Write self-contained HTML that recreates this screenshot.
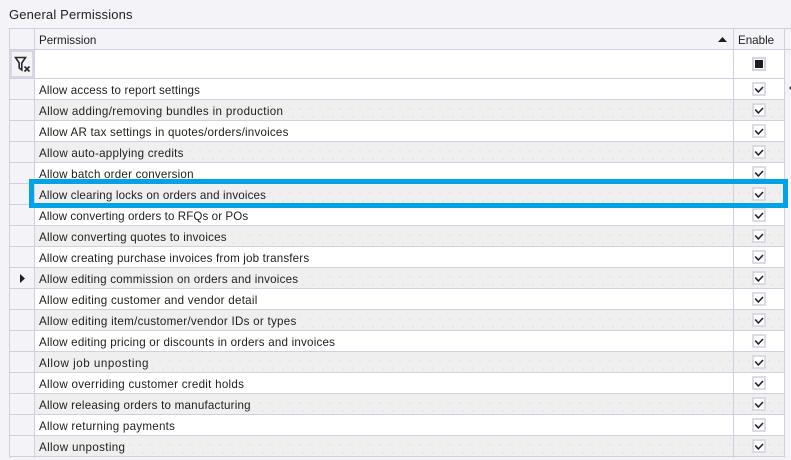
<!DOCTYPE html>
<html><head><meta charset="utf-8">
<style>
html,body{margin:0;padding:0}
body{width:791px;height:458px;overflow:hidden;background:#f4f4f8;position:relative;font-family:"Liberation Sans",sans-serif;color:#1e1e1e}
.a{position:absolute}
.h{background:#d0d0e0}
.r{position:absolute;left:35px;width:698px;height:20px;font-size:11.6px;letter-spacing:.21px;line-height:24px;padding-left:4px;box-sizing:border-box;white-space:nowrap;background:#fff}
.r.o,.e.o{background-color:#efefef;background-image:radial-gradient(circle,#e0e0e4 0.7px,transparent 0.9px),radial-gradient(circle,#e0e0e4 0.7px,transparent 0.9px);background-size:10px 10px,10px 10px;background-repeat:repeat-x,repeat-x;background-position:0 4px,3px 12px}
.r.o span{background:#efefef;display:inline-block;height:20px;padding-right:3px}
.e{position:absolute;left:734px;width:50px;height:20px;background:#fff}
svg.c{position:absolute;left:752px;width:14px;height:14px}
</style></head><body>
<div class="a" style="left:9px;top:7px;font-size:13px;letter-spacing:.16px;line-height:16px;color:#222">General Permissions</div>

<div class="a" style="left:35px;top:50px;width:698px;height:28px;background:#fff"></div>
<div class="a" style="left:734px;top:50px;width:50px;height:28px;background:#fff"></div>
<div class="a" style="left:39px;top:33px;font-size:11.6px;line-height:15px">Permission</div>
<div class="a" style="left:738px;top:33px;font-size:11.6px;line-height:15px">Enable</div>
<svg class="a" style="left:718px;top:37px" width="9" height="5"><path d="M0 5L4.5 0L9 5Z" fill="#1e1e1e"/></svg>

<div class="r" style="top:79px;letter-spacing:.145px">Allow access to report settings</div><div class="e" style="top:79px"></div>
<div class="r o" style="top:100px;letter-spacing:.33px"><span>Allow adding/removing bundles in production</span></div><div class="e o" style="top:100px"></div>
<div class="r" style="top:121px">Allow AR tax settings in quotes/orders/invoices</div><div class="e" style="top:121px"></div>
<div class="r o" style="top:142px;letter-spacing:.25px"><span>Allow auto-applying credits</span></div><div class="e o" style="top:142px"></div>
<div class="r" style="top:163px">Allow batch order conversion</div><div class="e" style="top:163px"></div>
<div class="r o" style="top:184px;letter-spacing:.14px"><span>Allow clearing locks on orders and invoices</span></div><div class="e o" style="top:184px"></div>
<div class="r" style="top:205px;letter-spacing:.08px">Allow converting orders to RFQs or POs</div><div class="e" style="top:205px"></div>
<div class="r o" style="top:226px"><span>Allow converting quotes to invoices</span></div><div class="e o" style="top:226px"></div>
<div class="r" style="top:247px;letter-spacing:.17px">Allow creating purchase invoices from job transfers</div><div class="e" style="top:247px"></div>
<div class="r o" style="top:268px"><span>Allow editing commission on orders and invoices</span></div><div class="e o" style="top:268px"></div>
<div class="r" style="top:289px;letter-spacing:.26px">Allow editing customer and vendor detail</div><div class="e" style="top:289px"></div>
<div class="r o" style="top:310px;letter-spacing:.27px"><span>Allow editing item/customer/vendor IDs or types</span></div><div class="e o" style="top:310px"></div>
<div class="r" style="top:331px">Allow editing pricing or discounts in orders and invoices</div><div class="e" style="top:331px"></div>
<div class="r o" style="top:352px;letter-spacing:.53px"><span>Allow job unposting</span></div><div class="e o" style="top:352px"></div>
<div class="r" style="top:373px;letter-spacing:.26px">Allow overriding customer credit holds</div><div class="e" style="top:373px"></div>
<div class="r o" style="top:394px"><span>Allow releasing orders to manufacturing</span></div><div class="e o" style="top:394px"></div>
<div class="r" style="top:415px;letter-spacing:.25px">Allow returning payments</div><div class="e" style="top:415px"></div>
<div class="r o" style="top:436px;letter-spacing:.34px"><span>Allow unposting</span></div><div class="e o" style="top:436px"></div>

<!-- grid lines -->
<div class="a h" style="left:9px;top:28px;width:1px;height:430px"></div>
<div class="a h" style="left:34px;top:28px;width:1px;height:430px"></div>
<div class="a h" style="left:733px;top:28px;width:1px;height:430px"></div>
<div class="a h" style="left:784px;top:28px;width:1px;height:430px"></div>
<div class="a h" style="left:9px;top:28px;width:782px;height:1px"></div>
<div class="a h" style="left:9px;top:49px;width:782px;height:1px"></div>
<div class="a h" style="left:9px;top:78px;width:776px;height:1px"></div>
<div class="a h" style="left:9px;top:99px;width:776px;height:1px"></div>
<div class="a h" style="left:9px;top:120px;width:776px;height:1px"></div>
<div class="a h" style="left:9px;top:141px;width:776px;height:1px"></div>
<div class="a h" style="left:9px;top:162px;width:776px;height:1px"></div>
<div class="a h" style="left:9px;top:183px;width:776px;height:1px"></div>
<div class="a h" style="left:9px;top:204px;width:776px;height:1px"></div>
<div class="a h" style="left:9px;top:225px;width:776px;height:1px"></div>
<div class="a h" style="left:9px;top:246px;width:776px;height:1px"></div>
<div class="a h" style="left:9px;top:267px;width:776px;height:1px"></div>
<div class="a h" style="left:9px;top:288px;width:776px;height:1px"></div>
<div class="a h" style="left:9px;top:309px;width:776px;height:1px"></div>
<div class="a h" style="left:9px;top:330px;width:776px;height:1px"></div>
<div class="a h" style="left:9px;top:351px;width:776px;height:1px"></div>
<div class="a h" style="left:9px;top:372px;width:776px;height:1px"></div>
<div class="a h" style="left:9px;top:393px;width:776px;height:1px"></div>
<div class="a h" style="left:9px;top:414px;width:776px;height:1px"></div>
<div class="a h" style="left:9px;top:435px;width:776px;height:1px"></div>
<div class="a h" style="left:9px;top:456px;width:776px;height:1px"></div>

<!-- filter button -->
<div class="a" style="left:10px;top:50px;width:20px;height:24px;border:2px solid #d8d8e4;background:#f4f4f8"></div>
<svg class="a" style="left:14px;top:56px" width="18" height="17" viewBox="0 0 18 17"><path d="M1.5 1.5H11.5L7.8 7V14L5.2 12V7Z" fill="none" stroke="#2a2a2a" stroke-width="1.6"/><path d="M10.5 10.5L15.5 15.5M15.5 10.5L10.5 15.5" stroke="#2a2a2a" stroke-width="1.7"/></svg>

<!-- tri-state checkbox -->
<div class="a" style="left:752px;top:57px;width:10px;height:10px;border:2px solid #d4d4e0;background:#fff"></div>
<div class="a" style="left:755px;top:60px;width:8px;height:8px;background:#1e1e1e"></div>

<!-- checkboxes -->
<svg class="c" style="top:82px" viewBox="0 0 14 14"><rect x="1" y="1" width="12" height="12" fill="#fff" stroke="#d4d4e0" stroke-width="1.6"/><path d="M3.2 6.5L6.3 10L11 5" fill="none" stroke="#222" stroke-width="1.6"/></svg>
<svg class="c" style="top:103px" viewBox="0 0 14 14"><rect x="1" y="1" width="12" height="12" fill="#fff" stroke="#d4d4e0" stroke-width="1.6"/><path d="M3.2 6.5L6.3 10L11 5" fill="none" stroke="#222" stroke-width="1.6"/></svg>
<svg class="c" style="top:124px" viewBox="0 0 14 14"><rect x="1" y="1" width="12" height="12" fill="#fff" stroke="#d4d4e0" stroke-width="1.6"/><path d="M3.2 6.5L6.3 10L11 5" fill="none" stroke="#222" stroke-width="1.6"/></svg>
<svg class="c" style="top:145px" viewBox="0 0 14 14"><rect x="1" y="1" width="12" height="12" fill="#fff" stroke="#d4d4e0" stroke-width="1.6"/><path d="M3.2 6.5L6.3 10L11 5" fill="none" stroke="#222" stroke-width="1.6"/></svg>
<svg class="c" style="top:166px" viewBox="0 0 14 14"><rect x="1" y="1" width="12" height="12" fill="#fff" stroke="#d4d4e0" stroke-width="1.6"/><path d="M3.2 6.5L6.3 10L11 5" fill="none" stroke="#222" stroke-width="1.6"/></svg>
<svg class="c" style="top:187px" viewBox="0 0 14 14"><rect x="1" y="1" width="12" height="12" fill="#fff" stroke="#d4d4e0" stroke-width="1.6"/><path d="M3.2 6.5L6.3 10L11 5" fill="none" stroke="#222" stroke-width="1.6"/></svg>
<svg class="c" style="top:208px" viewBox="0 0 14 14"><rect x="1" y="1" width="12" height="12" fill="#fff" stroke="#d4d4e0" stroke-width="1.6"/><path d="M3.2 6.5L6.3 10L11 5" fill="none" stroke="#222" stroke-width="1.6"/></svg>
<svg class="c" style="top:229px" viewBox="0 0 14 14"><rect x="1" y="1" width="12" height="12" fill="#fff" stroke="#d4d4e0" stroke-width="1.6"/><path d="M3.2 6.5L6.3 10L11 5" fill="none" stroke="#222" stroke-width="1.6"/></svg>
<svg class="c" style="top:250px" viewBox="0 0 14 14"><rect x="1" y="1" width="12" height="12" fill="#fff" stroke="#d4d4e0" stroke-width="1.6"/><path d="M3.2 6.5L6.3 10L11 5" fill="none" stroke="#222" stroke-width="1.6"/></svg>
<svg class="c" style="top:271px" viewBox="0 0 14 14"><rect x="1" y="1" width="12" height="12" fill="#fff" stroke="#d4d4e0" stroke-width="1.6"/><path d="M3.2 6.5L6.3 10L11 5" fill="none" stroke="#222" stroke-width="1.6"/></svg>
<svg class="c" style="top:292px" viewBox="0 0 14 14"><rect x="1" y="1" width="12" height="12" fill="#fff" stroke="#d4d4e0" stroke-width="1.6"/><path d="M3.2 6.5L6.3 10L11 5" fill="none" stroke="#222" stroke-width="1.6"/></svg>
<svg class="c" style="top:313px" viewBox="0 0 14 14"><rect x="1" y="1" width="12" height="12" fill="#fff" stroke="#d4d4e0" stroke-width="1.6"/><path d="M3.2 6.5L6.3 10L11 5" fill="none" stroke="#222" stroke-width="1.6"/></svg>
<svg class="c" style="top:334px" viewBox="0 0 14 14"><rect x="1" y="1" width="12" height="12" fill="#fff" stroke="#d4d4e0" stroke-width="1.6"/><path d="M3.2 6.5L6.3 10L11 5" fill="none" stroke="#222" stroke-width="1.6"/></svg>
<svg class="c" style="top:355px" viewBox="0 0 14 14"><rect x="1" y="1" width="12" height="12" fill="#fff" stroke="#d4d4e0" stroke-width="1.6"/><path d="M3.2 6.5L6.3 10L11 5" fill="none" stroke="#222" stroke-width="1.6"/></svg>
<svg class="c" style="top:376px" viewBox="0 0 14 14"><rect x="1" y="1" width="12" height="12" fill="#fff" stroke="#d4d4e0" stroke-width="1.6"/><path d="M3.2 6.5L6.3 10L11 5" fill="none" stroke="#222" stroke-width="1.6"/></svg>
<svg class="c" style="top:397px" viewBox="0 0 14 14"><rect x="1" y="1" width="12" height="12" fill="#fff" stroke="#d4d4e0" stroke-width="1.6"/><path d="M3.2 6.5L6.3 10L11 5" fill="none" stroke="#222" stroke-width="1.6"/></svg>
<svg class="c" style="top:418px" viewBox="0 0 14 14"><rect x="1" y="1" width="12" height="12" fill="#fff" stroke="#d4d4e0" stroke-width="1.6"/><path d="M3.2 6.5L6.3 10L11 5" fill="none" stroke="#222" stroke-width="1.6"/></svg>
<svg class="c" style="top:439px" viewBox="0 0 14 14"><rect x="1" y="1" width="12" height="12" fill="#fff" stroke="#d4d4e0" stroke-width="1.6"/><path d="M3.2 6.5L6.3 10L11 5" fill="none" stroke="#222" stroke-width="1.6"/></svg>

<!-- row indicator -->
<svg class="a" style="left:20px;top:274px" width="5" height="9"><path d="M0 0L5 4.5L0 9Z" fill="#1e1e1e"/></svg>
<!-- scrollbar arrow sliver -->
<svg class="a" style="left:789px;top:86px" width="2" height="4"><path d="M0 2L2 0V4Z" fill="#333"/></svg>

<!-- highlight -->
<div class="a" style="left:29px;top:179px;width:749px;height:19px;border:5px solid #00a3e4"></div>
</body></html>
